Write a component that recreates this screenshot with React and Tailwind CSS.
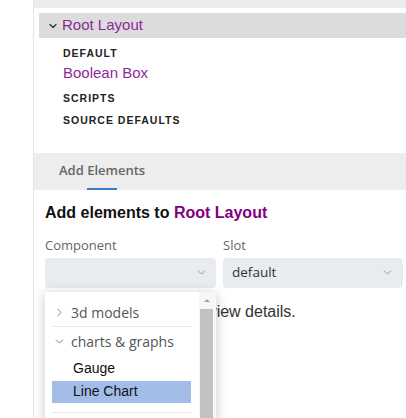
import { ChevronDown, ChevronRight } from "lucide-react";

const arial = { fontFamily: '"Liberation Sans", Arial, sans-serif' };

function TreeLabel({ children }) {
  return (
    <div className="pl-[24px] text-[10.5px] font-bold tracking-[1px] text-[#222] leading-none">
      {children}
    </div>
  );
}

export default function App() {
  return (
    <div className="w-[406px] h-[418px] overflow-hidden bg-white flex font-['Open_Sans',sans-serif]">
      {/* left gutter */}
      <div className="w-[34px] shrink-0 border-r border-[#e4e4e4]" />

      <div className="flex-1 flex flex-col">
        {/* top band */}
        <div className="h-[8px] bg-[#ececec]" />

        {/* tree */}
        <div className="pl-[5px] pt-[5px] font-['Liberation_Sans',Arial,sans-serif]">
          <div className="h-[25px] bg-[#dcdcdc] flex items-center pl-[8px]">
            <ChevronDown className="w-[12px] h-[12px] text-[#333]" strokeWidth={2.5} />
            <span className="ml-[3px] text-[15px] text-[#8e2a96]">Root Layout</span>
          </div>
          <div className="pt-[10px]">
            <TreeLabel>DEFAULT</TreeLabel>
            <div className="pl-[24px] mt-[5px] text-[15px] leading-[18px] text-[#8e2a96]">Boolean Box</div>
            <div className="mt-[11px]">
              <TreeLabel>SCRIPTS</TreeLabel>
            </div>
            <div className="mt-[12px]">
              <TreeLabel>SOURCE DEFAULTS</TreeLabel>
            </div>
          </div>
        </div>

        {/* tabs */}
        <div className="mt-[27px] h-[37px] bg-[#ededed] flex items-end pl-[25px]">
          <div className="relative h-full flex items-center">
            <span className="text-[13px] font-semibold text-[#666]">Add Elements</span>
            <div className="absolute left-[28px] bottom-0 w-[30px] h-[2px] bg-[#3b7bd0]" />
          </div>
        </div>

        {/* add elements */}
        <div className="pl-[11px] pr-[3px]">
          <h2 className="mt-[14px] text-[16px] font-bold text-[#111] leading-[18px]" style={arial}>
            Add elements to <span className="text-[#800080]">Root Layout</span>
          </h2>

          <div className="relative mt-[14px] grid grid-cols-[171px_1fr] gap-x-[7px]">
            <div>
              <div className="text-[13px] text-[#666] leading-[18px]">Component</div>
              <div className="mt-[4px] h-[30px] rounded-[4px] bg-[#e8ebf0] flex items-center justify-end pr-[8px]">
                <ChevronDown className="w-[13px] h-[13px] text-[#888]" strokeWidth={1.5} />
              </div>
            </div>
            <div>
              <div className="text-[13px] text-[#666] leading-[18px]">Slot</div>
              <div className="mt-[4px] h-[30px] rounded-[4px] bg-[#e8ebf0] flex items-center justify-between pl-[9px] pr-[9px]">
                <span className="text-[13.5px] text-[#333]">default</span>
                <ChevronDown className="w-[13px] h-[13px] text-[#888]" strokeWidth={1.5} />
              </div>
            </div>

            <p className="col-span-2 mt-[14px] text-[16px] leading-[20px] text-[#333]" style={arial}>
              Select a component to view details.
            </p>

            {/* dropdown popup */}
            <div className="absolute left-0 top-[56px] w-[171px] h-[140px] bg-white shadow-[0_2px_12px_rgba(0,0,0,0.22)] flex">
              <div className="flex-1 pl-[7px] pr-[8px] pt-[8px]">
                <div className="h-[27px] flex items-center border-b border-[#e6e6e6] pl-[1px]">
                  <ChevronRight className="w-[13px] h-[13px] text-[#666]" strokeWidth={1.5} />
                  <span className="ml-[5px] text-[14px] text-[#555]">3d models</span>
                </div>
                <div className="h-[30px] flex items-center pl-[1px]">
                  <ChevronDown className="w-[13px] h-[13px] text-[#666]" strokeWidth={1.5} />
                  <span className="ml-[5px] text-[14px] text-[#555]">charts &amp; graphs</span>
                </div>
                <div style={arial}>
                  <div className="h-[24px] flex items-center pl-[21px] text-[14px] text-[#111]">Gauge</div>
                  <div className="h-[22px] flex items-center pl-[21px] text-[14px] text-[#111] bg-[#a3bde9]">Line Chart</div>
                </div>
                <div className="mt-[9px] border-t border-[#e6e6e6]" />
              </div>
              {/* scrollbar */}
              <div className="w-[17px] shrink-0 flex flex-col items-center bg-[#f7f7f7] pr-[2px]">
                <div className="h-[17px] flex items-center justify-center">
                  <div className="w-0 h-0 border-l-[3px] border-r-[3px] border-b-[3px] border-l-transparent border-r-transparent border-b-[#a3a3a3]" />
                </div>
                <div className="w-[13px] flex-1 bg-[#c1c1c1]" />
              </div>
            </div>
          </div>
        </div>
      </div>
    </div>
  );
}
